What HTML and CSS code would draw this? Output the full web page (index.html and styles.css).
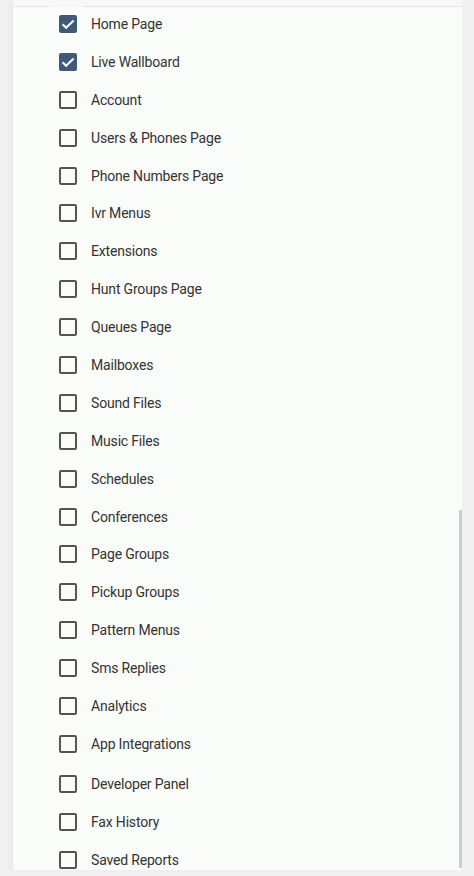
FILE: index.html
```html
<!DOCTYPE html>
<html>
<head>
<meta charset="utf-8">
<link rel="stylesheet" href="styles.css">
</head>
<body>
<div class="frame">
  <div class="topstrip"></div>
  <div class="topline"><span class="seg seg-left"></span><span class="seg-gap"></span><span class="seg seg-right"></span></div>
  <div class="card">
    <ul class="list">
      <li class="item"><span class="box checked"><svg viewBox="0 0 18 18" width="18" height="18"><path d="M3.6 9.2l3.5 3.5L14.6 5.4" fill="none" stroke="#fff" stroke-width="2.1"/></svg></span><span class="label">Home Page</span></li>
      <li class="item"><span class="box checked"><svg viewBox="0 0 18 18" width="18" height="18"><path d="M3.6 9.2l3.5 3.5L14.6 5.4" fill="none" stroke="#fff" stroke-width="2.1"/></svg></span><span class="label">Live Wallboard</span></li>
      <li class="item"><span class="box"></span><span class="label">Account</span></li>
      <li class="item"><span class="box"></span><span class="label">Users &amp; Phones Page</span></li>
      <li class="item"><span class="box"></span><span class="label">Phone Numbers Page</span></li>
      <li class="item"><span class="box"></span><span class="label">Ivr Menus</span></li>
      <li class="item"><span class="box"></span><span class="label">Extensions</span></li>
      <li class="item"><span class="box"></span><span class="label">Hunt Groups Page</span></li>
      <li class="item"><span class="box"></span><span class="label">Queues Page</span></li>
      <li class="item"><span class="box"></span><span class="label">Mailboxes</span></li>
      <li class="item"><span class="box"></span><span class="label">Sound Files</span></li>
      <li class="item"><span class="box"></span><span class="label">Music Files</span></li>
      <li class="item"><span class="box"></span><span class="label">Schedules</span></li>
      <li class="item"><span class="box"></span><span class="label">Conferences</span></li>
      <li class="item"><span class="box"></span><span class="label">Page Groups</span></li>
      <li class="item"><span class="box"></span><span class="label">Pickup Groups</span></li>
      <li class="item"><span class="box"></span><span class="label">Pattern Menus</span></li>
      <li class="item"><span class="box"></span><span class="label">Sms Replies</span></li>
      <li class="item"><span class="box"></span><span class="label">Analytics</span></li>
      <li class="item"><span class="box"></span><span class="label">App Integrations</span></li>
      <li class="item item-gap"><span class="box"></span><span class="label">Developer Panel</span></li>
      <li class="item"><span class="box"></span><span class="label">Fax History</span></li>
      <li class="item"><span class="box"></span><span class="label">Saved Reports</span></li>
    </ul>
    <div class="scrollbar"><div class="thumb"></div></div>
  </div>
</div>
</body>
</html>
```
FILE: styles.css
```css
html, body {
  margin: 0;
  padding: 0;
  height: 876px;
  overflow: hidden;
  background: #f1f1f1;
}
.frame {
  display: flex;
  flex-direction: column;
  margin-left: 13px;
  width: 449px;
  background: #f9f9f9;
  box-shadow: -4px 0 6px rgba(0,0,0,0.03);
}
.topstrip {
  height: 6px;
  background: #f8f8f8;
}
.topline {
  display: flex;
  height: 1px;
}
.seg {
  background: #e3e3e3;
}
.seg-left { width: 37px; }
.seg-gap { width: 33px; background: #f4f4f4; }
.seg-right { flex: 1; }
.card {
  display: flex;
  height: 863px;
  background: #fafcfa;
  overflow: hidden;
}
.list {
  list-style: none;
  margin: -2px 0 0 0;
  padding: 0;
  flex: 1;
}
.item {
  display: flex;
  align-items: center;
  height: 37.9px;
  padding-left: 46px;
}
.item-gap {
  margin-top: 2px;
}
.box {
  width: 18px;
  height: 18px;
  box-sizing: border-box;
  border: 2px solid #545454;
  border-radius: 2px;
  margin-right: 14px;
  display: flex;
  align-items: center;
  justify-content: center;
  flex-shrink: 0;
}
.box.checked {
  background: #3e5a76;
  border-color: #3e5a76;
}
.box svg {
  display: block;
  flex-shrink: 0;
}
.label {
  font-family: Roboto, "Liberation Sans", sans-serif;
  font-size: 14px;
  letter-spacing: -0.18px;
  color: #333;
}
.scrollbar {
  width: 3px;
  display: flex;
  flex-direction: column;
}
.thumb {
  margin-top: 503px;
  height: 358px;
  background: #c9ced8;
}
```
